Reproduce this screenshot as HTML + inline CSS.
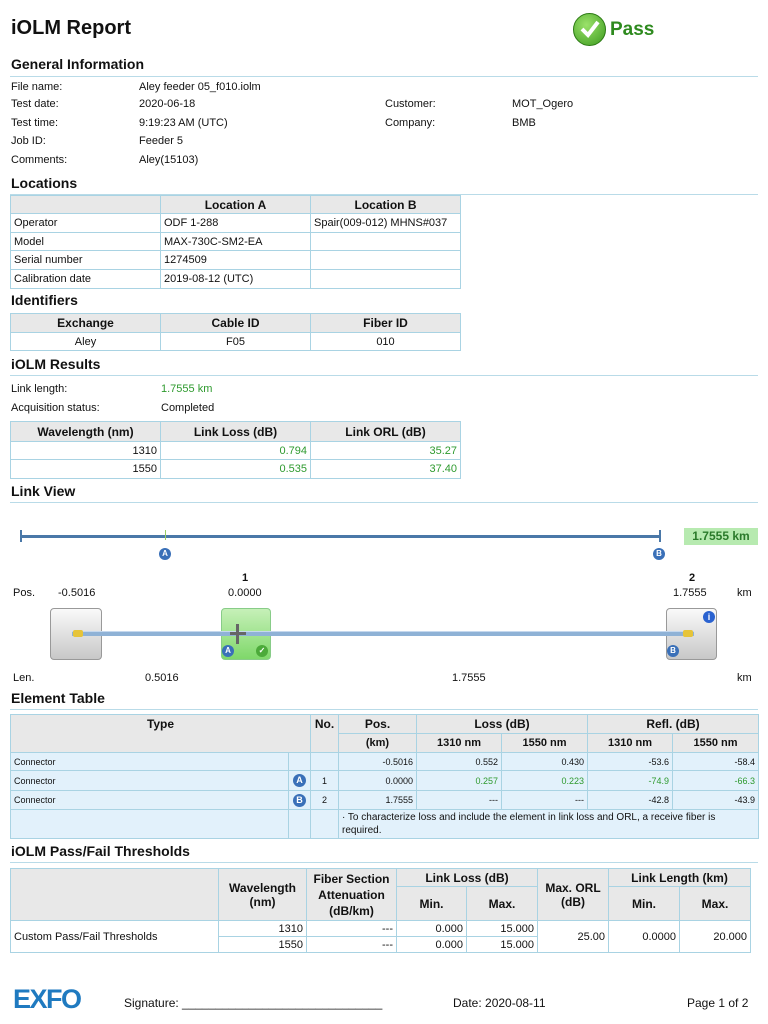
<!DOCTYPE html>
<html><head><meta charset="utf-8"><style>
*{margin:0;padding:0;box-sizing:border-box}
body{width:768px;height:1024px;background:#fff;font-family:"Liberation Sans",sans-serif;color:#111;position:relative;overflow:hidden;font-size:11px}
.a{position:absolute;white-space:nowrap}
.h{position:absolute;left:11px;font-weight:bold;font-size:14px}
.ln{position:absolute;left:10px;right:10px;height:1px;background:#b9dbe8}
table{position:absolute;border-collapse:collapse;table-layout:fixed;font-size:11px}
td,th{border:1px solid #a9d3e3;padding:0 3px;overflow:hidden;white-space:nowrap}
th{background:#e8e8e8;font-weight:bold;font-size:12px;text-align:center}
.r{text-align:right}.c{text-align:center}.g{color:#2e9a2e}
.et td{background:#e2f1fb;font-size:9px}
.bd{display:inline-block;width:14px;height:14px;border-radius:50%;background:#3a70b8;color:#fff;font-size:9px;font-weight:bold;text-align:center;line-height:14px}
</style></head><body>
<div class="a" style="left:11px;top:17px;font-size:20px;font-weight:bold">iOLM Report</div>
<div class="a" style="left:573px;top:13px;width:33px;height:33px;border-radius:50%;background:radial-gradient(circle at 40% 35%,#9be26a,#3c9a1e);border:1px solid #2c7a14"></div>
<svg class="a" style="left:578px;top:18px" width="24" height="22"><path d="M4 11 L10 17 L20 4" stroke="#fff" stroke-width="4" fill="none"/></svg>
<div class="a" style="left:610px;top:19px;font-size:19px;font-weight:bold;color:#2e8a1e">Pass</div>

<div class="h" style="top:56px">General Information</div><div class="ln" style="top:76px"></div>
<div class="a" style="left:11px;top:81px">File name:</div><div class="a" style="left:139px;top:81px">Aley feeder 05_f010.iolm</div>
<div class="a" style="left:11px;top:98px">Test date:</div><div class="a" style="left:139px;top:98px">2020-06-18</div>
<div class="a" style="left:385px;top:98px">Customer:</div><div class="a" style="left:512px;top:98px">MOT_Ogero</div>
<div class="a" style="left:11px;top:117px">Test time:</div><div class="a" style="left:139px;top:117px">9:19:23 AM (UTC)</div>
<div class="a" style="left:385px;top:117px">Company:</div><div class="a" style="left:512px;top:117px">BMB</div>
<div class="a" style="left:11px;top:135px">Job ID:</div><div class="a" style="left:139px;top:135px">Feeder 5</div>
<div class="a" style="left:11px;top:154px">Comments:</div><div class="a" style="left:139px;top:154px">Aley(15103)</div>

<div class="h" style="top:175px">Locations</div><div class="ln" style="top:194px"></div>
<table style="left:10px;top:195px;width:450px"><col width="150"><col width="150"><col width="150">
<tr style="height:18px"><th></th><th>Location A</th><th>Location B</th></tr>
<tr style="height:19px"><td>Operator</td><td>ODF 1-288</td><td>Spair(009-012) MHNS#037</td></tr>
<tr style="height:18px"><td>Model</td><td>MAX-730C-SM2-EA</td><td></td></tr>
<tr style="height:19px"><td>Serial number</td><td>1274509</td><td></td></tr>
<tr style="height:19px"><td>Calibration date</td><td>2019-08-12 (UTC)</td><td></td></tr></table>

<div class="h" style="top:292px">Identifiers</div>
<table style="left:10px;top:313px;width:450px"><col width="150"><col width="150"><col width="150">
<tr style="height:19px"><th>Exchange</th><th>Cable ID</th><th>Fiber ID</th></tr>
<tr style="height:18px"><td class="c">Aley</td><td class="c">F05</td><td class="c">010</td></tr></table>

<div class="h" style="top:356px">iOLM Results</div><div class="ln" style="top:375px"></div>
<div class="a" style="left:11px;top:383px">Link length:</div><div class="a g" style="left:161px;top:383px">1.7555 km</div>
<div class="a" style="left:11px;top:402px">Acquisition status:</div><div class="a" style="left:161px;top:402px">Completed</div>
<table style="left:10px;top:421px;width:450px"><col width="150"><col width="150"><col width="150">
<tr style="height:20px"><th>Wavelength (nm)</th><th>Link Loss (dB)</th><th>Link ORL (dB)</th></tr>
<tr style="height:18px"><td class="r">1310</td><td class="r g">0.794</td><td class="r g">35.27</td></tr>
<tr style="height:19px"><td class="r">1550</td><td class="r g">0.535</td><td class="r g">37.40</td></tr></table>

<div class="h" style="top:483px">Link View</div><div class="ln" style="top:502px"></div>
<div class="a" style="left:20px;top:535px;width:640px;height:3px;background:#4a78a8"></div>
<div class="a" style="left:20px;top:530px;width:2px;height:12px;background:#4a78a8"></div>
<div class="a" style="left:659px;top:530px;width:2px;height:12px;background:#4a78a8"></div>
<div class="a" style="left:165px;top:530px;width:1px;height:10px;background:#9c6"></div>
<div class="a" style="left:684px;top:528px;width:74px;height:17px;background:#b7eab0;color:#2a7a2a;font-size:12px;font-weight:bold;text-align:center;line-height:17px">1.7555 km</div>
<div class="a bd" style="left:159px;top:548px;width:12px;height:12px;line-height:12px;font-size:8px">A</div>
<div class="a bd" style="left:653px;top:548px;width:12px;height:12px;line-height:12px;font-size:8px">B</div>
<div class="a" style="left:242px;top:572px;font-weight:bold">1</div>
<div class="a" style="left:689px;top:572px;font-weight:bold">2</div>
<div class="a" style="left:13px;top:587px">Pos.</div><div class="a" style="left:58px;top:587px">-0.5016</div>
<div class="a" style="left:228px;top:587px">0.0000</div><div class="a" style="left:673px;top:587px">1.7555</div><div class="a" style="left:737px;top:587px">km</div>
<div class="a" style="left:50px;top:608px;width:52px;height:52px;border:1px solid #999;border-radius:4px;background:linear-gradient(#fafafa,#c8c8c8)"></div>
<div class="a" style="left:221px;top:608px;width:50px;height:52px;border:1px solid #8c8;border-radius:4px;background:linear-gradient(#c6f0b8,#7fd86a)"></div>
<div class="a" style="left:666px;top:608px;width:51px;height:52px;border:1px solid #999;border-radius:4px;background:linear-gradient(#fafafa,#c8c8c8)"></div>
<div class="a" style="left:72px;top:631px;width:622px;height:5px;background:#8fb2d6;border-top:1px solid #c5d8ee"></div>
<div class="a" style="left:236px;top:624px;width:3px;height:20px;background:#666"></div>
<div class="a" style="left:230px;top:632px;width:16px;height:3px;background:#666"></div>
<div class="a" style="left:73px;top:630px;width:10px;height:7px;background:#e6c43a;border-radius:2px"></div>
<div class="a" style="left:683px;top:630px;width:10px;height:7px;background:#e6c43a;border-radius:2px"></div>
<div class="a bd" style="left:222px;top:645px;width:12px;height:12px;line-height:12px;font-size:8px">A</div>
<div class="a bd" style="left:256px;top:645px;width:12px;height:12px;line-height:12px;font-size:8px;background:#4caa3a">✓</div>
<div class="a bd" style="left:667px;top:645px;width:12px;height:12px;line-height:12px;font-size:8px">B</div>
<div class="a bd" style="left:703px;top:611px;width:12px;height:12px;line-height:12px;font-size:9px;background:#2a62d0">i</div>
<div class="a" style="left:13px;top:672px">Len.</div><div class="a" style="left:145px;top:672px">0.5016</div>
<div class="a" style="left:452px;top:672px">1.7555</div><div class="a" style="left:737px;top:672px">km</div>

<div class="h" style="top:690px">Element Table</div><div class="ln" style="top:709px"></div>
<table class="et" style="left:10px;top:714px;width:748px"><col width="278"><col width="22"><col width="28"><col width="78"><col width="85"><col width="86"><col width="85"><col width="86">
<tr style="height:19px"><th rowspan="2" colspan="2" style="vertical-align:top;padding-top:2px">Type</th><th rowspan="2" style="vertical-align:top;padding-top:2px">No.</th><th>Pos.</th><th colspan="2">Loss (dB)</th><th colspan="2">Refl. (dB)</th></tr>
<tr style="height:19px"><th style="font-size:11px">(km)</th><th style="font-size:11px">1310 nm</th><th style="font-size:11px">1550 nm</th><th style="font-size:11px">1310 nm</th><th style="font-size:11px">1550 nm</th></tr>
<tr style="height:18px"><td>Connector</td><td></td><td></td><td class="r">-0.5016</td><td class="r">0.552</td><td class="r">0.430</td><td class="r">-53.6</td><td class="r">-58.4</td></tr>
<tr style="height:20px"><td>Connector</td><td class="c"><span class="bd" style="width:13px;height:13px;line-height:13px">A</span></td><td class="c">1</td><td class="r">0.0000</td><td class="r g">0.257</td><td class="r g">0.223</td><td class="r g">-74.9</td><td class="r g">-66.3</td></tr>
<tr style="height:19px"><td>Connector</td><td class="c"><span class="bd" style="width:13px;height:13px;line-height:13px">B</span></td><td class="c">2</td><td class="r">1.7555</td><td class="r">---</td><td class="r">---</td><td class="r">-42.8</td><td class="r">-43.9</td></tr>
<tr style="height:29px"><td></td><td></td><td></td><td colspan="5" style="white-space:normal;line-height:13px;font-size:10px;padding-right:20px">· To characterize loss and include the element in link loss and ORL, a receive fiber is required.</td></tr></table>

<div class="h" style="top:843px">iOLM Pass/Fail Thresholds</div><div class="ln" style="top:862px"></div>
<table style="left:10px;top:868px;width:740px"><col width="208"><col width="88"><col width="90"><col width="70"><col width="71"><col width="71"><col width="71"><col width="71">
<tr style="height:18px"><th rowspan="2"></th><th rowspan="2">Wavelength<br>(nm)</th><th rowspan="2" style="line-height:16px">Fiber Section<br>Attenuation<br>(dB/km)</th><th colspan="2">Link Loss (dB)</th><th rowspan="2">Max. ORL<br>(dB)</th><th colspan="2">Link Length (km)</th></tr>
<tr style="height:34px"><th>Min.</th><th>Max.</th><th>Min.</th><th>Max.</th></tr>
<tr style="height:16px"><td rowspan="2">Custom Pass/Fail Thresholds</td><td class="r">1310</td><td class="r">---</td><td class="r">0.000</td><td class="r">15.000</td><td rowspan="2" class="r">25.00</td><td rowspan="2" class="r">0.0000</td><td rowspan="2" class="r">20.000</td></tr>
<tr style="height:16px"><td class="r">1550</td><td class="r">---</td><td class="r">0.000</td><td class="r">15.000</td></tr></table>

<div class="a" style="left:13px;top:984px;font-size:27px;font-weight:bold;color:#1f7ac0;letter-spacing:-1.5px">EXFO</div>
<div class="a" style="left:124px;top:996px;font-size:12px">Signature: ______________________________</div>
<div class="a" style="left:453px;top:996px;font-size:12px">Date: 2020-08-11</div>
<div class="a" style="left:687px;top:996px;font-size:12px">Page 1 of 2</div>
</body></html>
